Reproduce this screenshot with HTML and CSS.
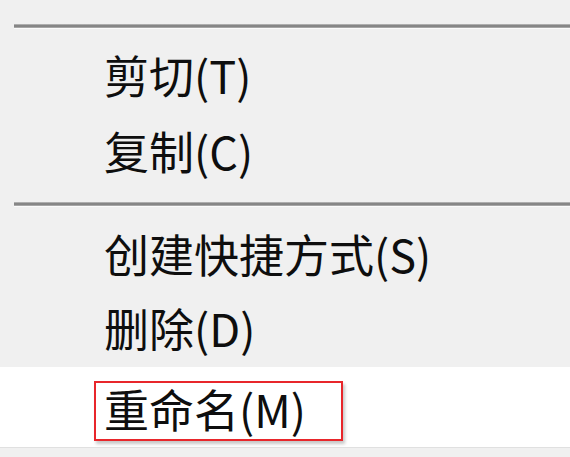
FILE: index.html
```html
<!DOCTYPE html>
<html lang="zh-CN">
<head>
<meta charset="utf-8">
<title>右键菜单</title>
<link rel="stylesheet" href="styles.css">
</head>
<body>
<div class="menu">
  <div class="top-pad"></div>
  <div class="sep"></div>
  <div class="group group-first">
    <div class="item">剪切(T)</div>
    <div class="item">复制(C)</div>
  </div>
  <div class="sep sep-second"></div>
  <div class="group group-second">
    <div class="item item-a">创建快捷方式(S)</div>
    <div class="item item-b">删除(D)</div>
    <div class="item item-hover"><span class="mark">重命名(M)</span></div>
  </div>
  <div class="bottom"></div>
</div>
</body>
</html>
```

FILE: styles.css
```css
html, body {
  margin: 0;
  padding: 0;
}
body {
  width: 570px;
  height: 457px;
  overflow: hidden;
  background: #f0f0f0;
  font-family: "Noto Sans CJK SC", "Noto Sans", sans-serif;
  color: #0e0e0e;
}
.menu {
  display: flex;
  flex-direction: column;
}
.top-pad {
  height: 24px;
}
.sep {
  margin-left: 14px;
  height: 4px;
  background: linear-gradient(#c4c4c4, #868686 35%, #868686 70%, #bdbdbd);
  border-bottom: 1px solid #fbfbfb;
}
.sep-second {
  margin-top: 13px;
}
.group-first {
  padding-top: 8px;
}
.group-second {
  padding-top: 10px;
}
.item {
  height: 76px;
  line-height: 76px;
  padding-left: 104px;
  font-size: 45px;
  font-weight: 400;
  white-space: nowrap;
}
.item-a {
  height: 74px;
  line-height: 74px;
}
.item-b {
  height: 76px;
  line-height: 73px;
}
.item-hover {
  background: #ffffff;
  height: 80px;
  display: flex;
  align-items: center;
  box-sizing: border-box;
  padding-left: 94px;
  padding-top: 8px;
}
.mark {
  display: inline-block;
  box-sizing: border-box;
  width: 249px;
  height: 60px;
  line-height: 51px;
  padding: 0 0 5px 8px;
  border: 2px solid #e8262b;
  box-shadow: 2px 3px 3px rgba(0, 0, 0, 0.22);
}
.bottom {
  height: 10px;
  border-top: 1px solid #e0e0e0;
  background: #f0f0f0;
}
```
